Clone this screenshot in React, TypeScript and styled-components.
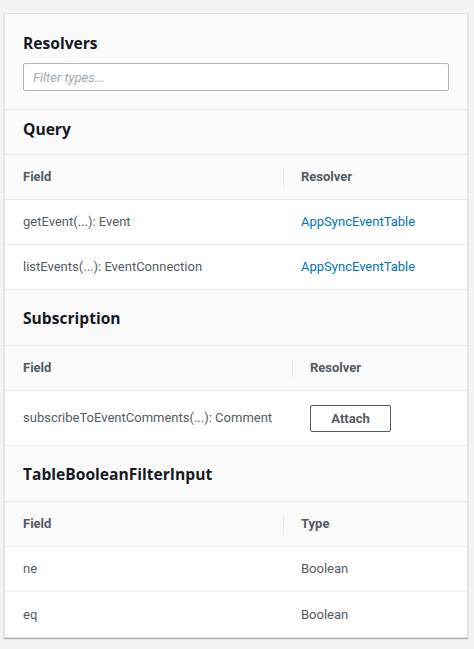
import React from "react";
import styled, { createGlobalStyle } from "styled-components";

const Global = createGlobalStyle`
  html, body { margin: 0; padding: 0; background: #f2f3f3; }
  body { font-family: Roboto, "Liberation Sans", Arial, sans-serif; }
  * { box-sizing: border-box; }
`;

const Page = styled.div`
  padding: 13px 6px 10px 4px;
`;

const Card = styled.div`
  background: #fafafa;
  border: 1px solid #e1e4e4;
  box-shadow: 0 1px 1px 0 rgba(0, 28, 36, 0.3);
`;

const Top = styled.div`
  padding: 16px 18px 18px 18px;
  border-bottom: 1px solid #eaeded;
`;

const Title = styled.h2`
  margin: 0 0 7px;
  font-family: "Open Sans", Roboto, sans-serif;
  font-size: 15.6px;
  line-height: 26px;
  font-weight: 700;
  color: #16191f;
`;

const Filter = styled.input`
  display: block;
  width: 100%;
  height: 28px;
  border: 1px solid #aab7b8;
  border-radius: 2px;
  background: #fff;
  padding: 0 9px;
  font-family: inherit;
  font-size: 13px;
  color: #16191f;
  &::placeholder {
    color: #a0a8ab;
    font-style: italic;
  }
`;

const SectionHead = styled.div<{ $first?: boolean }>`
  height: ${(p) => (p.$first ? 45 : 56)}px;
  display: flex;
  align-items: center;
  padding: ${(p) => (p.$first ? "0 18px 7px" : "0 18px")};
  font-family: "Open Sans", Roboto, sans-serif;
  font-size: 15.6px;
  font-weight: 700;
  color: #16191f;
  border-bottom: 1px solid #eaeded;
  background: #fafafa;
`;

const Row = styled.div<{ $col: number; $head?: boolean; $tall?: boolean; $end?: boolean }>`
  display: grid;
  grid-template-columns: ${(p) => p.$col}px 1fr;
  height: ${(p) => (p.$tall ? 55 : 45)}px;
  align-items: center;
  background: ${(p) => (p.$head ? "#fafafa" : "#fff")};
  border-bottom: ${(p) => (p.$end ? "none" : "1px solid #eaeded")};
  font-size: 13px;
  color: #545b64;
`;

const Cell = styled.div<{ $head?: boolean; $sep?: boolean }>`
  position: relative;
  padding-left: 18px;
  line-height: 20px;
  font-weight: ${(p) => (p.$head ? 700 : 400)};
  white-space: nowrap;
  ${(p) =>
    p.$sep
      ? `&::before { content: ""; position: absolute; left: 0; top: 1px; height: 20px; width: 1px; background: #eaeded; }`
      : ""}
`;

const Link = styled.a`
  color: #0073bb;
  text-decoration: none;
`;

const Button = styled.button`
  width: 81px;
  height: 27px;
  background: #fff;
  border: 1px solid #545b64;
  border-radius: 2px;
  font-family: inherit;
  font-size: 13px;
  font-weight: 700;
  color: #545b64;
  padding: 0;
`;

type Item = { field: string; value: React.ReactNode };

function Table({
  title,
  col,
  second,
  items,
  tall,
  first,
  last,
}: {
  title: string;
  col: number;
  second: string;
  items: Item[];
  tall?: boolean;
  first?: boolean;
  last?: boolean;
}) {
  return (
    <section>
      <SectionHead $first={first}>{title}</SectionHead>
      <Row $col={col} $head>
        <Cell $head>Field</Cell>
        <Cell $head $sep>
          {second}
        </Cell>
      </Row>
      {items.map((it, i) => (
        <Row key={i} $col={col} $tall={tall} $end={last && i === items.length - 1}>
          <Cell>{it.field}</Cell>
          <Cell>{it.value}</Cell>
        </Row>
      ))}
    </section>
  );
}

export default function App() {
  return (
    <>
      <Global />
      <Page>
        <Card>
          <Top>
            <Title>Resolvers</Title>
            <Filter placeholder="Filter types..." />
          </Top>
          <Table
            title="Query"
            col={278}
            second="Resolver"
            first
            items={[
              { field: "getEvent(...): Event", value: <Link>AppSyncEventTable</Link> },
              { field: "listEvents(...): EventConnection", value: <Link>AppSyncEventTable</Link> },
            ]}
          />
          <Table
            title="Subscription"
            col={287}
            second="Resolver"
            tall
            items={[
              { field: "subscribeToEventComments(...): Comment", value: <Button>Attach</Button> },
            ]}
          />
          <Table
            title="TableBooleanFilterInput"
            col={278}
            second="Type"
            last
            items={[
              { field: "ne", value: "Boolean" },
              { field: "eq", value: "Boolean" },
            ]}
          />
        </Card>
      </Page>
    </>
  );
}
